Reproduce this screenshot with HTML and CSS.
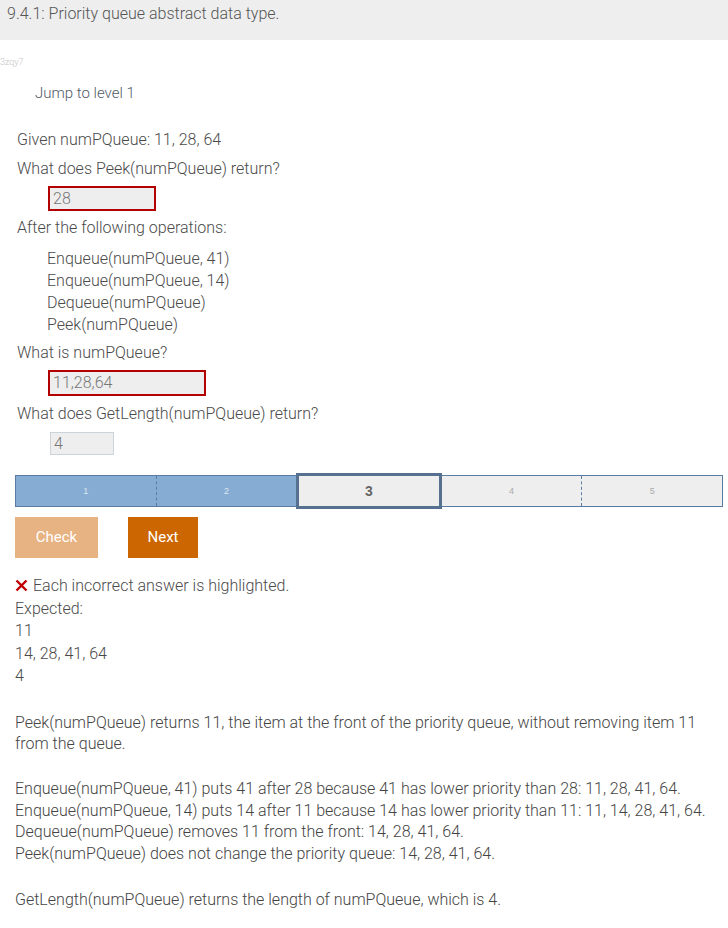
FILE: index.html
```html
<!DOCTYPE html>
<html>
<head>
<meta charset="utf-8">
<link rel="stylesheet" href="styles.css">
</head>
<body>
<div class="title">9.4.1: Priority queue abstract data type.</div>
<div class="idtag">3zqy7</div>
<div class="jump">Jump to level 1</div>
<div class="content">
  <div class="line q1">Given numPQueue: 11, 28, 64</div>
  <div class="line gap7">What does Peek(numPQueue) return?</div>
  <div class="answer wrong w1">28</div>
  <div class="line gap6">After the following operations:</div>
  <div class="ops">
    <div>Enqueue(numPQueue, 41)</div>
    <div>Enqueue(numPQueue, 14)</div>
    <div>Dequeue(numPQueue)</div>
    <div>Peek(numPQueue)</div>
  </div>
  <div class="line gap6">What is numPQueue?</div>
  <div class="answer wrong w2">11,28,64</div>
  <div class="line gap7">What does GetLength(numPQueue) return?</div>
  <div class="answer right w3">4</div>
</div>
<div class="levels">
  <div class="seg done">1</div>
  <div class="seg done dash">2</div>
  <div class="seg current">3</div>
  <div class="seg todo">4</div>
  <div class="seg todo dash">5</div>
</div>
<div class="buttons">
  <div class="btn check">Check</div>
  <div class="btn next">Next</div>
</div>
<div class="feedback">
  <div class="fb-line"><svg class="xmark" width="13" height="13" viewBox="0 0 13 13"><path d="M1.5 1.5 L11.5 11.5 M11.5 1.5 L1.5 11.5" stroke="#c00000" stroke-width="2.4" fill="none"/></svg>Each incorrect answer is highlighted.</div>
  <div class="fb-line">Expected:</div>
  <div class="fb-line">11</div>
  <div class="fb-line">14, 28, 41, 64</div>
  <div class="fb-line">4</div>
</div>
<div class="explain">
  <p>Peek(numPQueue) returns 11, the item at the front of the priority queue, without removing item 11 from the queue.</p>
  <p class="p2">Enqueue(numPQueue, 41) puts 41 after 28 because 41 has lower priority than 28: 11, 28, 41, 64.<br>Enqueue(numPQueue, 14) puts 14 after 11 because 14 has lower priority than 11: 11, 14, 28, 41, 64.<br>Dequeue(numPQueue) removes 11 from the front: 14, 28, 41, 64.<br>Peek(numPQueue) does not change the priority queue: 14, 28, 41, 64.</p>
  <p>GetLength(numPQueue) returns the length of numPQueue, which is 4.</p>
</div>
</body>
</html>
```

FILE: styles.css
```css
body {
  margin: 0;
  font-family: Roboto, "Noto Sans", sans-serif;
  font-weight: 300;
  color: #4a4a4a;
  background: #fff;
}
.title {
  background: #eeeeee;
  height: 40px;
  line-height: 28px;
  padding-left: 7px;
  font-size: 16px;
  color: #555;
  box-sizing: border-box;
}
.idtag {
  margin-top: 16px;
  height: 12px;
  line-height: 12px;
  font-size: 9px;
  color: #c4c4c4;
}
.jump {
  margin-top: 15px;
  margin-left: 35px;
  line-height: 20px;
  font-size: 15px;
  font-weight: 300;
  color: #4f5a66;
}
.content {
  padding-left: 17px;
  font-size: 16px;
}
.line {
  line-height: 22px;
}
.q1 { margin-top: 26px; }
.gap6 { margin-top: 6px; }
.gap7 { margin-top: 7px; }
.answer {
  margin-left: 31px;
  background: #eeeeee;
  box-sizing: border-box;
  font-size: 16px;
  color: #777;
  padding-left: 3px;
}
.wrong {
  border: 2px solid #b30000;
}
.right {
  border: 1px solid #ccd4da;
}
.w1 { margin-top: 6px; width: 108px; height: 25px; line-height: 21px; }
.w2 { margin-top: 6px; width: 158px; height: 26px; line-height: 22px; }
.w3 { margin-top: 7px; margin-left: 33px; width: 64px; height: 23px; line-height: 21px; }
.ops {
  margin-top: 9px;
  padding-left: 30px;
  line-height: 22px;
}
.levels {
  display: flex;
  margin: 20px 0 0 15px;
  width: 708px;
  height: 32px;
  border: 1px solid #5a7ca3;
  box-sizing: border-box;
}
.seg {
  flex: 1;
  display: flex;
  align-items: center;
  justify-content: center;
  font-size: 9px;
  font-family: "Liberation Sans", Arial, sans-serif;
  font-weight: 400;
}
.done {
  background: #87acd3;
  color: #dbe6f2;
}
.todo {
  background: #eeeeee;
  color: #aaa;
}
.dash {
  border-left: 1px dashed #5a7ca3;
}
.current {
  background: #eeeeee;
  margin: -3px 0;
  border: 3px solid #56708f;
  font-size: 14px;
  font-weight: 700;
  color: #666;
}
.buttons {
  display: flex;
  gap: 30px;
  margin: 10px 0 0 15px;
}
.btn {
  height: 41px;
  line-height: 41px;
  text-align: center;
  color: #fff;
  font-size: 15px;
  font-weight: 400;
}
.check { width: 83px; background: #e8b382; }
.next { width: 70px; background: #cc6600; }
.feedback {
  margin: 17px 0 0 15px;
  font-size: 16px;
}
.fb-line {
  line-height: 22.5px;
}
.xmark {
  margin-right: 5px;
  vertical-align: -1px;
}
.explain {
  margin: 24px 0 0 15px;
  padding-right: 10px;
  font-size: 16px;
  line-height: 21.5px;
  color: #444;
}
.explain p {
  margin: 0 0 23.5px 0;
}
.explain .p2 {
  margin-bottom: 25px;
}
```
